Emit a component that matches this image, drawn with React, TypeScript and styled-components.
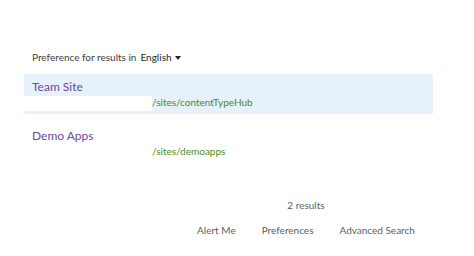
import React from "react";
import styled, { createGlobalStyle } from "styled-components";

const Global = createGlobalStyle`
  html, body { margin: 0; padding: 0; background: #ffffff; }
  body { font-family: "Lato", "Open Sans", sans-serif; width: 474px; height: 256px; overflow: hidden; }
`;

const Page = styled.div`
  display: flex;
  flex-direction: column;
  padding: 49px 0 0 24px;
  width: 409px;
`;

const PrefLine = styled.div`
  display: flex;
  align-items: center;
  gap: 4px;
  padding-left: 8px;
  font-size: 10px;
  color: #404040;
  height: 16px;
`;

const LangButton = styled.span`
  display: inline-flex;
  align-items: center;
  gap: 3px;
  color: #262626;
`;

const Caret = styled.span`
  width: 0;
  height: 0;
  border-left: 3px solid transparent;
  border-right: 3px solid transparent;
  border-top: 4px solid #262626;
  margin-top: 1px;
`;

const Results = styled.div`
  display: flex;
  flex-direction: column;
  gap: 9px;
  margin-top: 9px;
`;

const Result = styled.div<{ $active?: boolean }>`
  display: flex;
  flex-direction: column;
  height: 40px;
  padding: 5px 0 0 8px;
  box-sizing: border-box;
  background: ${(p) => (p.$active ? "#e6f1fb" : "transparent")};
`;

const Title = styled.div`
  font-size: 12px;
  color: #6a4a9c;
  line-height: 16px;
`;

const UrlRow = styled.div`
  display: flex;
  align-items: flex-start;
  height: 15px;
  margin-top: 1px;
  margin-left: -8px;
`;

const Masked = styled.div<{ $white?: boolean }>`
  width: 128px;
  height: 15px;
  background: ${(p) => (p.$white ? "#ffffff" : "transparent")};
`;

const Url = styled.span`
  font-size: 10px;
  line-height: 12px;
  color: #4c8a22;
`;

const Footer = styled.div`
  display: flex;
  flex-direction: column;
  align-items: center;
  margin-left: 155px;
  width: 254px;
  margin-top: 35px;
  font-size: 10px;
  color: #606060;
`;

const Count = styled.div`
  line-height: 14px;
`;

const Links = styled.div`
  display: flex;
  gap: 26px;
  margin-top: 11px;
  line-height: 14px;
`;

const Link = styled.span`
  color: #606060;
`;

export default function App() {
  return (
    <>
      <Global />
      <Page>
        <PrefLine>
          <span>Preference for results in</span>
          <LangButton>
            English <Caret />
          </LangButton>
        </PrefLine>
        <Results>
          <Result $active>
            <Title>Team Site</Title>
            <UrlRow>
              <Masked $white />
              <Url>/sites/contentTypeHub</Url>
            </UrlRow>
          </Result>
          <Result>
            <Title>Demo Apps</Title>
            <UrlRow>
              <Masked />
              <Url>/sites/demoapps</Url>
            </UrlRow>
          </Result>
        </Results>
        <Footer>
          <Count>2 results</Count>
          <Links>
            <Link>Alert Me</Link>
            <Link>Preferences</Link>
            <Link>Advanced Search</Link>
          </Links>
        </Footer>
      </Page>
    </>
  );
}
